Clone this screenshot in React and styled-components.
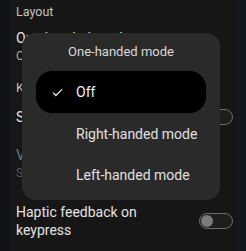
import React from 'react';
import styled, { createGlobalStyle } from 'styled-components';

const GlobalStyle = createGlobalStyle`
  html, body {
    margin: 0;
    padding: 0;
    background: #141414;
  }
  body {
    font-family: Roboto, "Noto Sans", sans-serif;
    -webkit-font-smoothing: antialiased;
  }
`;

const Screen = styled.div`
  position: relative;
  width: 246px;
  height: 251px;
  overflow: hidden;
  display: flex;
  background: #141414;
`;

const EdgeStrip = styled.div`
  width: ${props => props.width}px;
  flex: none;
  background: ${props => props.color};
`;

const Settings = styled.div`
  flex: 1;
  display: flex;
  flex-direction: column;
  padding: 4px 0 0 6px;
  background: #161616;
`;

const SectionHeader = styled.div`
  font-size: 12.5px;
  color: #c2c2c2;
  height: 16px;
  line-height: 16px;
  margin-bottom: ${props => props.gap || 0}px;
`;

const Item = styled.div`
  display: flex;
  align-items: center;
  justify-content: space-between;
  padding-right: 4px;
  margin-bottom: ${props => props.gap || 0}px;
  opacity: ${props => (props.disabled ? 0.45 : 1)};
`;

const ItemText = styled.div`
  display: flex;
  flex-direction: column;
`;

const Title = styled.div`
  font-size: 14px;
  line-height: 18px;
  color: #e4e4e4;
`;

const Summary = styled.div`
  font-size: 12px;
  line-height: 18px;
  color: #a8a8a8;
`;

const Switch = styled.div`
  width: 30px;
  height: 14px;
  border: 1.5px solid #6c6c6c;
  border-radius: 9px;
  background: #1e1e1e;
  display: flex;
  align-items: center;
  padding: 0 1px;
  box-sizing: content-box;
  flex: none;
`;

const Thumb = styled.div`
  width: 12px;
  height: 12px;
  border-radius: 50%;
  background: #7c7c7c;
`;

const Dialog = styled.div`
  position: absolute;
  left: 22px;
  top: 33px;
  width: 198px;
  height: 167px;
  border-radius: 14px;
  background: #2a2a2a;
  display: flex;
  flex-direction: column;
  align-items: center;
  box-sizing: border-box;
  padding-top: 10px;
`;

const DialogTitle = styled.div`
  font-size: 13px;
  line-height: 18px;
  color: #d9d9d9;
  margin-bottom: 10px;
`;

const OptionList = styled.div`
  display: flex;
  flex-direction: column;
  width: 170px;
`;

const Option = styled.div`
  height: ${props => (props.selected ? 42 : 41)}px;
  border-radius: 16px;
  background: ${props => (props.selected ? '#000' : 'transparent')};
  display: flex;
  align-items: center;
  padding-left: 16px;
  font-size: 14px;
  color: ${props => (props.selected ? '#f2f2f2' : '#e0e0e0')};
`;

const CheckSlot = styled.div`
  width: 24px;
  display: flex;
  align-items: center;
`;

const Check = () => (
  <svg width="11" height="9" viewBox="0 0 11 9">
    <path d="M1 4.6 L3.9 7.5 L10 1.4" fill="none" stroke="#e8e8e8" strokeWidth="1.3" />
  </svg>
);

export default function App() {
  const options = ['Off', 'Right-handed mode', 'Left-handed mode'];
  return (
    <Screen>
      <GlobalStyle />
      <EdgeStrip width={10} color="#0f1217" />
      <Settings>
        <SectionHeader gap={9}>Layout</SectionHeader>
        <Item gap={15}>
          <ItemText>
            <Title>One-handed mode</Title>
            <Summary>Off</Summary>
          </ItemText>
        </Item>
        <SectionHeader gap={12}>Keypress</SectionHeader>
        <Item gap={20}>
          <ItemText>
            <Title>Sound on keypress</Title>
          </ItemText>
          <Switch>
            <Thumb />
          </Switch>
        </Item>
        <Item gap={21} disabled>
          <ItemText>
            <Title>Volume on keypress</Title>
            <Summary>System default</Summary>
          </ItemText>
        </Item>
        <Item>
          <ItemText>
            <Title>Haptic feedback on</Title>
            <Title>keypress</Title>
          </ItemText>
          <Switch>
            <Thumb />
          </Switch>
        </Item>
      </Settings>
      <EdgeStrip width={9} color="#101820" />
      <Dialog>
        <DialogTitle>One-handed mode</DialogTitle>
        <OptionList>
          {options.map((o, i) => (
            <Option key={o} selected={i === 0}>
              <CheckSlot>{i === 0 && <Check />}</CheckSlot>
              {o}
            </Option>
          ))}
        </OptionList>
      </Dialog>
    </Screen>
  );
}
